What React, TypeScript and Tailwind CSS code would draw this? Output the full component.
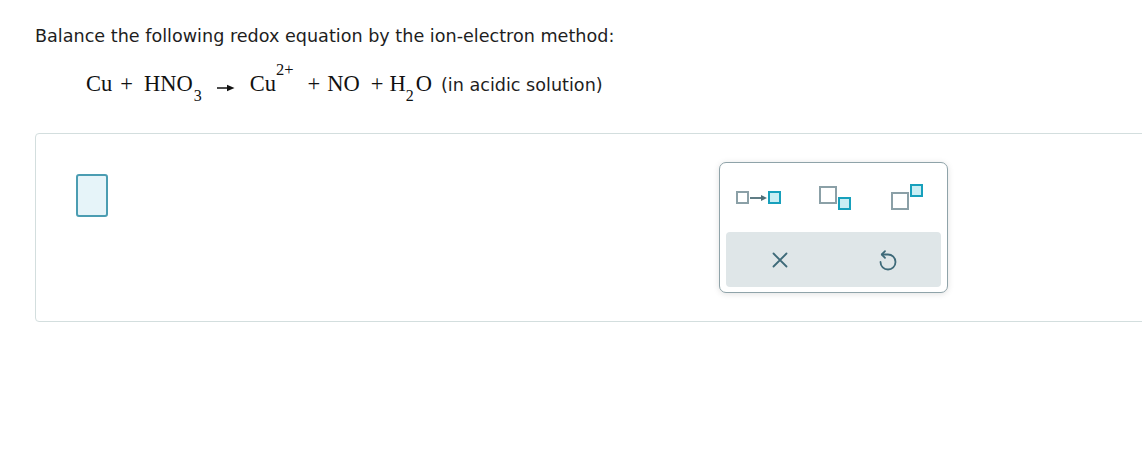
import React from "react"

const serif = { fontFamily: '"Liberation Serif", "Times New Roman", serif' }
const sans = { fontFamily: '"DejaVu Sans", Verdana, sans-serif' }

function ReactionArrow() {
  return (
    <span className="ml-[15px] relative top-[1px] inline-block">
      <svg width="18" height="8" viewBox="0 0 18 8" className="block">
        <line x1="0" y1="4" x2="12" y2="4" stroke="#111" strokeWidth="1.5" />
        <path d="M10 0.8 L17.5 4 L10 7.2 Z" fill="#111" />
      </svg>
    </span>
  )
}

function Sq({ teal, size }: { teal?: boolean; size: number }) {
  return (
    <span
      className={
        teal
          ? "block border-2 border-[#17a0bc] bg-[#c9eef4]"
          : "block border-2 border-[#8ba0a7] bg-white"
      }
      style={{ width: size, height: size }}
    />
  )
}

function UndoIcon() {
  return (
    <svg width="24" height="24" viewBox="0 0 24 24" fill="none" stroke="#3e6a79" strokeWidth="1.8" strokeLinecap="round" strokeLinejoin="round">
      <path d="M9 2.2 L5.8 5.5 L9 8.8" />
      <path d="M6 5.5 H12 A7.5 7.5 0 1 1 4.5 13" />
    </svg>
  )
}

function XIcon() {
  return (
    <svg width="16" height="16" viewBox="0 0 16 16" fill="none" stroke="#3e6a79" strokeWidth="1.8" strokeLinecap="round">
      <path d="M1.5 1.5 L14.5 14.5 M14.5 1.5 L1.5 14.5" />
    </svg>
  )
}

export default function App() {
  return (
    <div className="w-[1142px] h-[453px] overflow-hidden bg-white">
      <div className="pl-[35px] pt-[24px]">
        <p className="text-[17.6px] leading-[24px] text-[#1e1e1e]" style={sans}>
          Balance the following redox equation by the ion-electron method:
        </p>

        <div className="mt-[22px] ml-[51px] flex items-baseline h-[28px] text-[22.5px] leading-[28px] text-[#111]" style={serif}>
          <span>Cu</span>
          <span className="ml-[8px]">+</span>
          <span className="ml-[11px]">HNO</span>
          <span className="ml-[1px] text-[16px] relative top-[10px]">3</span>
          <ReactionArrow />
          <span className="ml-[15px]">Cu</span>
          <span className="text-[16.5px] relative top-[-16px]">2+</span>
          <span className="ml-[14px]">+</span>
          <span className="ml-[7px]">NO</span>
          <span className="ml-[11px]">+</span>
          <span className="ml-[6px]">H</span>
          <span className="text-[16px] relative top-[10px]">2</span>
          <span className="ml-[2px]">O</span>
          <span className="ml-[9px] text-[17.6px] text-[#1e1e1e]" style={sans}>
            (in acidic solution)
          </span>
        </div>

        <div className="mt-[35px] w-[1130px] h-[189px] border border-[#d3dede] rounded-[4px] flex items-start">
          <div className="ml-[40px] mt-[40px] w-[32px] h-[43px] rounded-[3px] border-2 border-[#4b9db2] bg-[#e6f4f9]" />

          <div className="ml-[611px] mt-[28px] w-[229px] h-[131px] rounded-[7px] border border-[#8fa3a9] bg-white shadow-[0_1px_6px_rgba(0,0,0,0.12)] px-[6px] pb-[5px] flex flex-col">
            <div className="flex-1 grid grid-cols-3 items-center">
              <div className="flex justify-center items-center pr-[6px]">
                <Sq size={13} />
                <svg width="19" height="8" viewBox="0 0 19 8">
                  <line x1="1" y1="4" x2="14" y2="4" stroke="#4f6f78" strokeWidth="1.8" />
                  <path d="M12 1 L18 4 L12 7 Z" fill="#4f6f78" />
                </svg>
                <Sq teal size={13} />
              </div>
              <div className="flex justify-center pl-[3px]">
                <div className="flex items-start">
                  <Sq size={18} />
                  <div className="mt-[11px] ml-[1px]">
                    <Sq teal size={13} />
                  </div>
                </div>
              </div>
              <div className="flex justify-center pl-[4px] pb-[2px]">
                <div className="flex items-start">
                  <div className="mt-[8px] mr-[1px]">
                    <Sq size={18} />
                  </div>
                  <Sq teal size={13} />
                </div>
              </div>
            </div>
            <div className="h-[55px] rounded-[4px] bg-[#dfe6e8] grid grid-cols-2 items-center">
              <div className="flex justify-center pl-[1px]">
                <XIcon />
              </div>
              <div className="flex justify-center pl-[1px] pt-[2px]">
                <UndoIcon />
              </div>
            </div>
          </div>
        </div>
      </div>
    </div>
  )
}
